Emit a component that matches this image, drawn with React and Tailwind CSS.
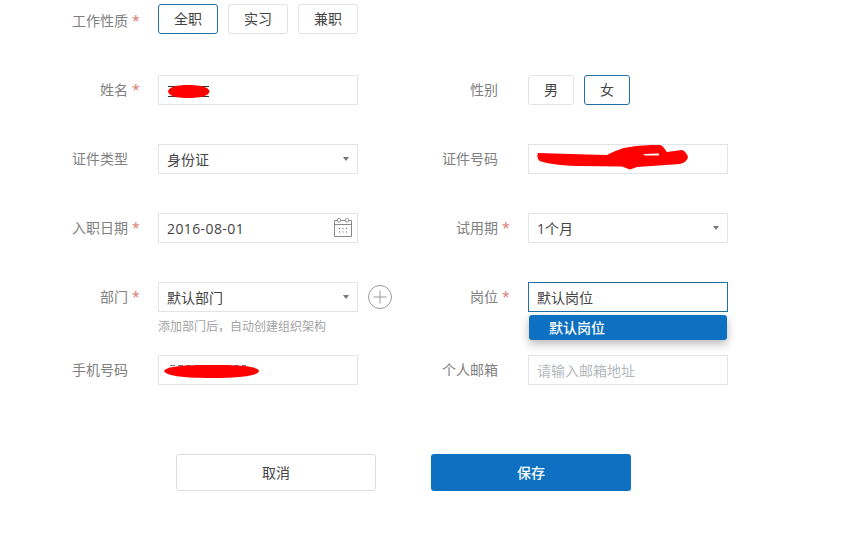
import React from 'react';

const Field = ({ label, required, children, labelClass = 'pb-[2px]' }) => (
  <div className="flex w-[370px] shrink-0">
    <div className={`flex h-[30px] w-[98px] shrink-0 items-center text-[14px] text-[#808080] ${labelClass}`}>
      <span className="-ml-[1px] w-[69px] whitespace-nowrap text-right">{label}</span>
      {required && <span className="pl-[4px] text-[#d9776f]">*</span>}
    </div>
    {children}
  </div>
);

const Choice = ({ label, active, width = 'w-[60px]' }) => (
  <button
    className={`h-[30px] ${width} rounded-[3px] border bg-white pb-[2px] text-[14px] text-[#444] ${
      active ? 'border-[#1f6fa8]' : 'border-[#dfe3e8]'
    }`}
  >
    {label}
  </button>
);

const Box = ({ children, focused, className = '' }) => (
  <div
    className={`relative flex h-[30px] w-[200px] items-center border bg-white pl-[8px] text-[14px] text-[#444] ${
      focused ? 'border-[#1f6fa8]' : 'border-[#e1e5ea]'
    } ${className}`}
  >
    {children}
  </div>
);

const Caret = () => (
  <span className="absolute right-[8px] top-[12px] h-0 w-0 border-x-[3px] border-t-[4px] border-x-transparent border-t-[#777]" />
);

const CalendarIcon = () => (
  <svg className="absolute right-[4px] top-[4px]" width="20" height="20" viewBox="0 0 20 20" fill="none" stroke="#8a8a8a" strokeWidth="1">
    <path d="M4.5 2.5H1.5V18.5H18.5V2.5H15.5M7.5 2.5H12.5" />
    <rect x="4.5" y="0.5" width="3" height="3.5" rx="1" />
    <rect x="12.5" y="0.5" width="3" height="3.5" rx="1" />
    <path d="M1.5 6.5H18.5" />
    <path d="M6 10.5H7M9.5 10.5H10.5M13 10.5H14M6 14H7M9.5 14H10.5M13 14H14" stroke="#666" />
  </svg>
);

const Scribble = ({ className, width, height, d, children }) => (
  <svg className={`absolute ${className}`} width={width} height={height} viewBox={`0 0 ${width} ${height}`}>
    {children}
    <path d={d} fill="#fe0000" fillRule="evenodd" />
  </svg>
);

const App = () => {
  return (
    <div className="h-[545px] w-[862px] overflow-hidden bg-white pl-[60px] pt-[4px] font-['Open_Sans','Noto_Sans_CJK_SC',sans-serif]">
      <Field label="工作性质" required labelClass="pt-[2px]">
        <div className="flex gap-[10px]">
          <Choice label="全职" active />
          <Choice label="实习" />
          <Choice label="兼职" />
        </div>
      </Field>

      <div className="mt-[41px] flex">
        <Field label="姓名" required>
          <Box>
            <Scribble
              className="left-[9px] top-[8px]"
              width="42"
              height="16"
              d="M0 7.5C1 3 8 1 20 1C32 1 41 3 41.500 7.500C41 12 32 14 20 14C8 14 1 12 0 7.500Z"
            >
              <path d="M0 2.500H41M0 12.500H41" stroke="#333" strokeWidth="1" />
            </Scribble>
          </Box>
        </Field>
        <Field label="性别">
          <div className="flex gap-[10px]">
            <Choice label="男" width="w-[46px]" />
            <Choice label="女" active width="w-[46px]" />
          </div>
        </Field>
      </div>

      <div className="mt-[39px] flex">
        <Field label="证件类型">
          <Box>
            身份证
            <Caret />
          </Box>
        </Field>
        <Field label="证件号码">
          <Box>
            <Scribble
              className="left-[8px] top-[0px]"
              width="152"
              height="25"
              d="M1 8L50 9.500L70 10C78 6 84 3 93 2C105 0 118 0 123 0C127 1 128 5 130 7L145 5C148 6 150 9 151 12C150 16 147 18 143 19L100 22L93 24.500L85 21.500L40 21C22 20.500 6 18 2 15.500C0 13 0 10 1 8ZM106 9L122 8.500L122 10.500L108 10.500Z"
            />
          </Box>
        </Field>
      </div>

      <div className="mt-[39px] flex">
        <Field label="入职日期" required>
          <Box>
            <span className="tracking-[0.4px]">2016-08-01</span>
            <CalendarIcon />
          </Box>
        </Field>
        <Field label="试用期" required>
          <Box>
            1个月
            <Caret />
          </Box>
        </Field>
      </div>

      <div className="mt-[39px] flex">
        <Field label="部门" required>
          <div>
            <Box>
              默认部门
              <Caret />
              <svg className="absolute left-[209px] top-[2px]" width="24" height="24" viewBox="0 0 24 24" fill="none" stroke="#999" strokeWidth="1">
                <circle cx="12" cy="12" r="11.500" />
                <path d="M12 5.500V18.500M5.500 12H18.500" />
              </svg>
            </Box>
            <p className="mt-[6px] h-[18px] whitespace-nowrap text-[12px] leading-[18px] text-[#a3a3a3]">添加部门后，自动创建组织架构</p>
          </div>
        </Field>
        <Field label="岗位" required>
          <div className="relative">
            <Box focused>默认岗位</Box>
            <div className="absolute left-[1px] top-[33px] z-10 flex h-[25px] w-[198px] items-center rounded-[3px] bg-[#0d70c0] pl-[20px] text-[14px] font-medium text-white shadow-[0_4px_10px_rgba(0,0,0,0.28)]">
              默认岗位
            </div>
          </div>
        </Field>
      </div>

      <div className="mt-[19px] flex">
        <Field label="手机号码">
          <Box>
            <Scribble
              className="left-[5px] top-[5px]"
              width="96"
              height="20"
              d="M0 10C2 6 14 4 48 4C82 4 94 6 95 10C94 14 82 17 48 17C14 17 2 14 0 10Z"
            >
              <path d="M6 4.500H82" stroke="#777" strokeWidth="1" strokeDasharray="5 3" />
            </Scribble>
          </Box>
        </Field>
        <Field label="个人邮箱">
          <Box>
            <span className="text-[#b3b8bd]">请输入邮箱地址</span>
          </Box>
        </Field>
      </div>

      <div className="ml-[116px] mt-[69px] flex gap-[55px]">
        <button className="h-[37px] w-[200px] rounded-[3px] border border-[#dcdcdc] bg-white text-[14px] text-[#444]">取消</button>
        <button className="h-[37px] w-[200px] rounded-[3px] bg-[#0d70c0] text-[14px] font-medium text-white">保存</button>
      </div>
    </div>
  );
};

export default App;
